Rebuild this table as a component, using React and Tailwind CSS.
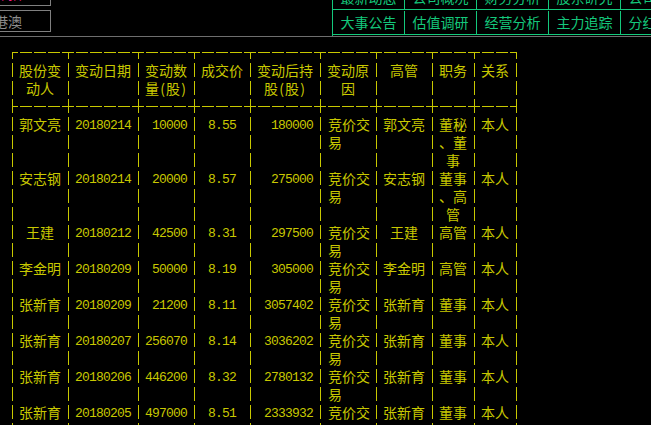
import React from 'react';

const bar = 'bg-[repeating-linear-gradient(to_bottom,transparent_0_2px,#c8c800_2px_16px,transparent_16px_18px)] bg-no-repeat bg-size-[1px_100%]';
const cols = 'grid grid-cols-[56px_70px_56px_56px_70px_56px_56px_42px_42px_1px]';
const hline = 'bg-[repeating-linear-gradient(to_right,#c8c800_0_6px,transparent_6px_8px,#c8c800_8px_14px)] bg-no-repeat bg-size-[505px_1px] bg-position-[0_9px]';
const stub = 'bg-[linear-gradient(#c8c800,#c8c800)] bg-no-repeat bg-size-[1px_7px] bg-position-[0_9px]';
const num = "font-['Liberation_Mono',monospace] text-[13px] tracking-[-0.8px] leading-[21px] h-[18px]";
const han = 'leading-[18px] h-[18px]';

const tabs = ['最新动态', '公司概况', '财务分析', '股东研究', '公司大事', '大事公告', '估值调研', '经营分析', '主力追踪', '分红扩股'];

const header = [
    ['股份变', '动人'],
    ['变动日期'],
    ['变动数', '量(股)'],
    ['成交价'],
    ['变动后持', '股(股)'],
    ['变动原', '因'],
    ['高管'],
    ['职务'],
    ['关系'],
];

const rows = [
    { name: '郭文亮', date: '20180214', qty: '10000', price: '8.55', after: '180000', duty: ['董秘', '、董', '事'] },
    { name: '安志钢', date: '20180214', qty: '20000', price: '8.57', after: '275000', duty: ['董事', '、高', '管'] },
    { name: '王建', date: '20180212', qty: '42500', price: '8.31', after: '297500', duty: ['高管'] },
    { name: '李金明', date: '20180209', qty: '50000', price: '8.19', after: '305000', duty: ['高管'] },
    { name: '张新育', date: '20180209', qty: '21200', price: '8.11', after: '3057402', duty: ['董事'] },
    { name: '张新育', date: '20180207', qty: '256070', price: '8.14', after: '3036202', duty: ['董事'] },
    { name: '张新育', date: '20180206', qty: '446200', price: '8.32', after: '2780132', duty: ['董事'] },
    { name: '张新育', date: '20180205', qty: '497000', price: '8.51', after: '2333932', duty: ['董事'] },
    { name: '张新育', date: '20180202', qty: '300000', price: '8.60', after: '1836932', duty: ['董事'] },
];

// half-width parens take one 7px cell
const Txt = ({ s }) =>
    s.split(/([()])/).map((p, i) =>
        p === '(' || p === ')' ? (
            <span key={i} className="inline-block w-[7px] text-center">{p}</span>
        ) : (
            <span key={i}>{p}</span>
        )
    );

const App = () => {
    return (
        <div className="w-[651px] h-[425px] overflow-hidden bg-black font-['Noto_Sans_CJK_SC',sans-serif] text-[14px] text-[#c8c800]">
            <div className="flex h-[36px] overflow-hidden">
                <div className="w-[332px] shrink-0 -mt-[16px] flex flex-col gap-[4px]">
                    <div className="h-[22px] w-[72px] -ml-[21px] border border-[#808080] pl-[14px] leading-[17px] text-[#ff1a8c]">深指</div>
                    <div className="h-[22px] w-[72px] -ml-[21px] border border-[#808080] pl-[14px] leading-[20px] text-[#8c8c8c]">港澳</div>
                </div>
                <div className="-mt-[15px] shrink-0 border-l border-t border-[#14c87c] grid grid-cols-[repeat(5,72px)]">
                    {tabs.map((t) => (
                        <div key={t} className="h-[24px] border-r border-b border-[#14c87c] text-center leading-[23px] text-[#14c87c] whitespace-nowrap">
                            {t}
                        </div>
                    ))}
                </div>
            </div>
            <div className="h-px bg-[#6e6e6e]"></div>

            <div className="ml-[12px] mt-[6px]">
                {/* top border */}
                <div className={`${cols} h-[18px] ${hline}`}>
                    {Array.from({ length: 10 }).map((_, i) => (
                        <div key={i} className={stub}></div>
                    ))}
                </div>

                {/* header */}
                <div className={`${cols} h-[36px]`}>
                    {header.map((lines, i) => (
                        <div key={i} className={`${bar} text-center`}>
                            {lines.map((l) => (
                                <div key={l} className={han}><Txt s={l} /></div>
                            ))}
                        </div>
                    ))}
                    <div className={bar}></div>
                </div>

                {/* separator */}
                <div className={`${cols} h-[18px] ${hline}`}>
                    {Array.from({ length: 10 }).map((_, i) => (
                        <div key={i} className={bar}></div>
                    ))}
                </div>

                {rows.map((r, i) => (
                    <div key={i} className={cols}>
                        <div className={`${bar} text-center`}><div className={han}>{r.name}</div></div>
                        <div className={`${bar} text-center`}><div className={num}>{r.date}</div></div>
                        <div className={`${bar} text-right pr-[7px]`}><div className={num}>{r.qty}</div></div>
                        <div className={`${bar} text-center`}><div className={num}>{r.price}</div></div>
                        <div className={`${bar} text-right pr-[7px]`}><div className={num}>{r.after}</div></div>
                        <div className={`${bar} text-left pl-[8px]`}>
                            <div className={han}>竞价交</div>
                            <div className={han}>易</div>
                        </div>
                        <div className={`${bar} text-center`}><div className={han}>{r.name}</div></div>
                        <div className={`${bar} text-center`}>
                            {r.duty.map((d, j) => (
                                <div key={j} className={han}>{d}</div>
                            ))}
                        </div>
                        <div className={`${bar} text-center`}><div className={han}>本人</div></div>
                        <div className={bar}></div>
                    </div>
                ))}
            </div>
        </div>
    );
};

export default App;
